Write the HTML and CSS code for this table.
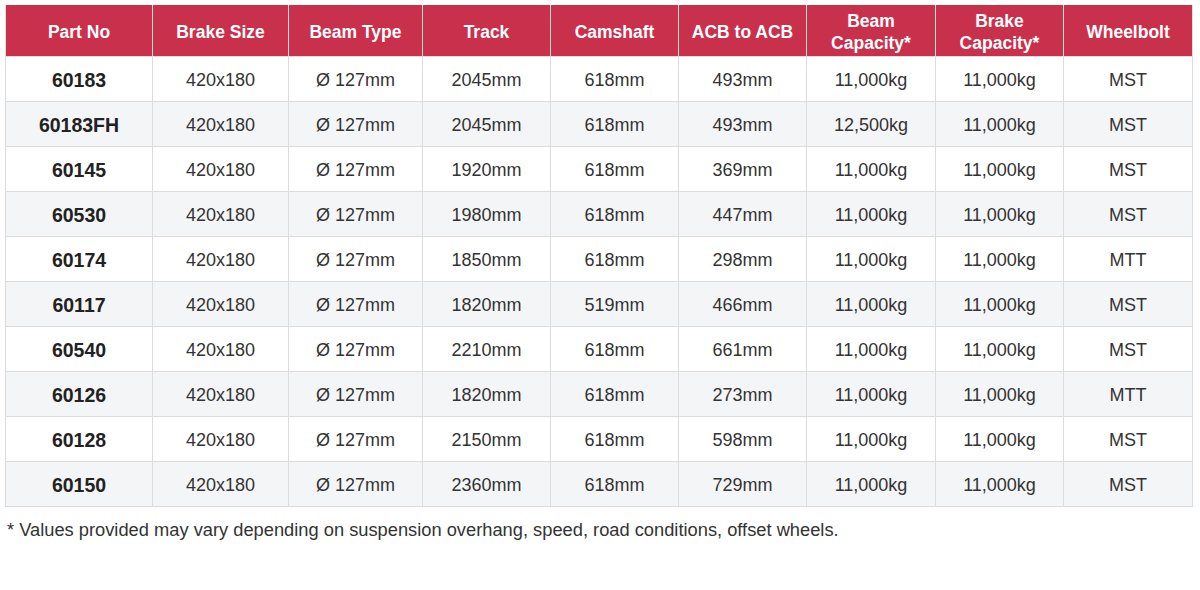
FILE: index.html
```html
<!DOCTYPE html>
<html>
<head>
<meta charset="utf-8">
<link rel="stylesheet" href="styles.css">
</head>
<body>
<div class="wrap">
<table class="specs">
<colgroup>
<col class="c1"><col class="c2"><col class="c3"><col class="c4"><col class="c5"><col class="c6"><col class="c7"><col class="c8"><col class="c9">
</colgroup>
<thead>
<tr><th>Part No</th><th>Brake Size</th><th>Beam Type</th><th>Track</th><th>Camshaft</th><th>ACB to ACB</th><th>Beam<br>Capacity*</th><th>Brake<br>Capacity*</th><th>Wheelbolt</th></tr>
</thead>
<tbody>
<tr><td class="pn">60183</td><td>420x180</td><td>Ø 127mm</td><td>2045mm</td><td>618mm</td><td>493mm</td><td>11,000kg</td><td>11,000kg</td><td>MST</td></tr>
<tr><td class="pn">60183FH</td><td>420x180</td><td>Ø 127mm</td><td>2045mm</td><td>618mm</td><td>493mm</td><td>12,500kg</td><td>11,000kg</td><td>MST</td></tr>
<tr><td class="pn">60145</td><td>420x180</td><td>Ø 127mm</td><td>1920mm</td><td>618mm</td><td>369mm</td><td>11,000kg</td><td>11,000kg</td><td>MST</td></tr>
<tr><td class="pn">60530</td><td>420x180</td><td>Ø 127mm</td><td>1980mm</td><td>618mm</td><td>447mm</td><td>11,000kg</td><td>11,000kg</td><td>MST</td></tr>
<tr><td class="pn">60174</td><td>420x180</td><td>Ø 127mm</td><td>1850mm</td><td>618mm</td><td>298mm</td><td>11,000kg</td><td>11,000kg</td><td>MTT</td></tr>
<tr><td class="pn">60117</td><td>420x180</td><td>Ø 127mm</td><td>1820mm</td><td>519mm</td><td>466mm</td><td>11,000kg</td><td>11,000kg</td><td>MST</td></tr>
<tr><td class="pn">60540</td><td>420x180</td><td>Ø 127mm</td><td>2210mm</td><td>618mm</td><td>661mm</td><td>11,000kg</td><td>11,000kg</td><td>MST</td></tr>
<tr><td class="pn">60126</td><td>420x180</td><td>Ø 127mm</td><td>1820mm</td><td>618mm</td><td>273mm</td><td>11,000kg</td><td>11,000kg</td><td>MTT</td></tr>
<tr><td class="pn">60128</td><td>420x180</td><td>Ø 127mm</td><td>2150mm</td><td>618mm</td><td>598mm</td><td>11,000kg</td><td>11,000kg</td><td>MST</td></tr>
<tr><td class="pn">60150</td><td>420x180</td><td>Ø 127mm</td><td>2360mm</td><td>618mm</td><td>729mm</td><td>11,000kg</td><td>11,000kg</td><td>MST</td></tr>
</tbody>
</table>
<p class="note">* Values provided may vary depending on suspension overhang, speed, road conditions, offset wheels.</p>
</div>
</body>
</html>
```
FILE: styles.css
```css
html, body {
  margin: 0;
  padding: 0;
  background: #ffffff;
}
body {
  font-family: "Liberation Sans", Arial, sans-serif;
  color: #333333;
}
.wrap {
  padding: 5px 0 0 5px;
}
.specs {
  border-collapse: collapse;
  table-layout: fixed;
  width: 1187px;
}
.c1 { width: 147px; }
.c2 { width: 136px; }
.c3 { width: 134px; }
.c4 { width: 128px; }
.c5 { width: 128px; }
.c6 { width: 128px; }
.c7 { width: 129px; }
.c8 { width: 128px; }
.c9 { width: 129px; }
.specs th {
  background: #c9304b;
  color: #ffffff;
  font-weight: bold;
  font-size: 17.5px;
  line-height: 22px;
  height: 49px;
  padding: 2px 0 0 0;
  border: 1px solid #dcdcdc;
  border-top: none;
  text-align: center;
  vertical-align: middle;
}
.specs td {
  height: 42px;
  padding: 2px 0 0 0;
  border: 1px solid #dcdcdc;
  text-align: center;
  vertical-align: middle;
  font-size: 18px;
  color: #333333;
}
.specs tbody tr:nth-child(even) td {
  background: #f4f5f7;
}
.specs td.pn {
  font-weight: bold;
  font-size: 19.5px;
  color: #222222;
}
.note {
  margin: 12px 0 0 2px;
  font-size: 18.3px;
  color: #333333;
}
```
